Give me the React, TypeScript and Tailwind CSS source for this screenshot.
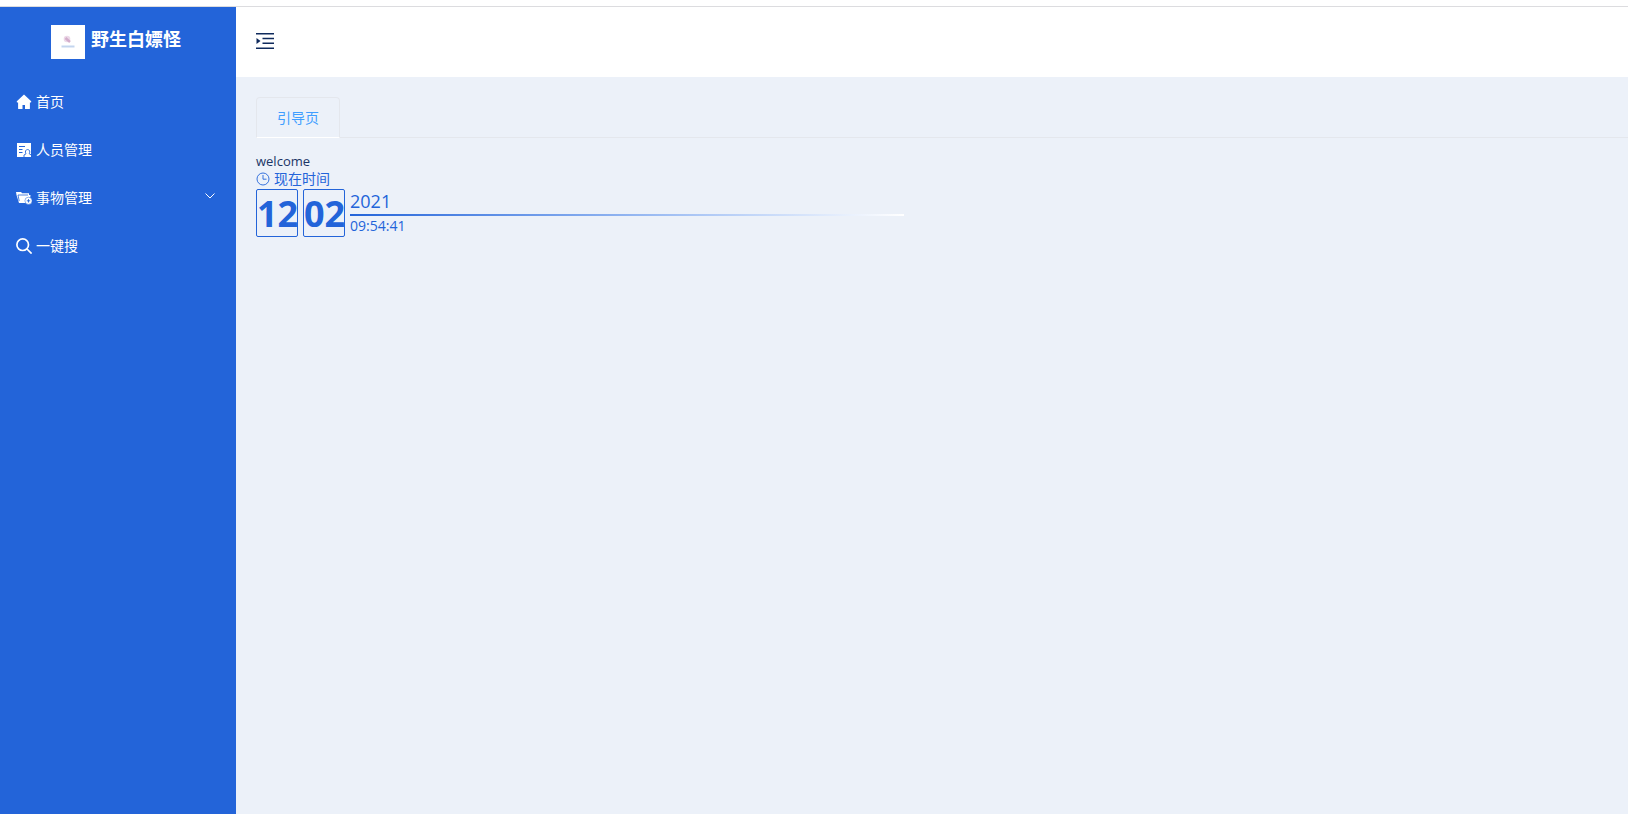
import { useState } from 'react'
import type { ReactNode } from 'react'

// ── Icons ──────────────────────────────────────────────────────────────────────

function HomeIcon() {
  return (
    <svg className="w-4 h-4 shrink-0" viewBox="0 0 16 16" fill="currentColor" aria-hidden="true">
      <path d="M8 0.600 L0.800 7.200 Q0.500 8.400 1.400 8.500 H2.100 V14.400 Q2.100 15 2.700 15 H6.500 V11 H9 V15 H13.300 Q13.900 15 13.900 14.400 V8.500 H14.600 Q15.500 8.400 15.200 7.200 Z" />
    </svg>
  )
}

function StaffIcon() {
  return (
    <svg className="w-4 h-4 shrink-0" viewBox="0 0 16 16" aria-hidden="true">
      <path fill="currentColor" d="M1 1h14v14H1z" />
      <path stroke="#2364d9" strokeWidth="1.1" fill="none" d="M3 4.500h6M3 7.500h3.500M3 10.500h3.500" />
      <path stroke="#2364d9" strokeWidth="0.900" fill="none" d="M8 15v-2l2-1.200C8.600 9.500 9.800 7.500 11.600 7.500s3 2 1.600 4.300l2 1.200" />
    </svg>
  )
}

function FolderIcon() {
  return (
    <svg className="w-4 h-4 shrink-0" viewBox="0 0 16 16" aria-hidden="true">
      <path fill="currentColor" d="M0 2h5l1.200 1.300H13V5h1.500L14 9.500V13H3L0.500 5z" />
      <path fill="none" stroke="#2364d9" strokeWidth="0.800" d="M3.200 11L2 5h10" />
      <circle cx="12.500" cy="10.800" r="3.600" fill="currentColor" stroke="#2364d9" strokeWidth="0.500" />
      <path stroke="#2364d9" strokeWidth="0.900" d="M10.800 10.800h3.400M12.500 9.100v3.400" />
    </svg>
  )
}

function SearchIcon() {
  return (
    <svg className="w-4 h-4 shrink-0" viewBox="0 0 16 16" fill="none" stroke="currentColor" strokeWidth="1.7" aria-hidden="true">
      <circle cx="6.700" cy="6.700" r="5.800" />
      <path d="M11 11l4.600 4.600" />
    </svg>
  )
}

function ChevronIcon() {
  return (
    <svg className="w-3 h-3" viewBox="0 0 12 12" fill="none" stroke="currentColor" strokeWidth="1" aria-hidden="true">
      <path d="M1.500 3.500L6 8l4.500-4.500" />
    </svg>
  )
}

function IndentIcon() {
  return (
    <svg className="w-[18px] h-4" viewBox="0 0 18 16" aria-hidden="true">
      <path stroke="#0f2a5c" strokeWidth="1.6" d="M0 0.800h18M6.500 5.500h11.500M6.500 10.300h11.500M0 15.200h18" />
      <path fill="#0f2a5c" d="M0.500 5l4 3-4 3z" />
    </svg>
  )
}

function ClockIcon() {
  return (
    <svg className="w-3.5 h-3.5" viewBox="0 0 14 14" fill="none" stroke="currentColor" strokeWidth="0.9" aria-hidden="true">
      <circle cx="7" cy="7" r="6" />
      <path d="M7 3v4.200h3.500" />
    </svg>
  )
}

function Logo() {
  return (
    <svg className="w-[34px] h-[34px] bg-white shrink-0" viewBox="0 0 34 34" aria-hidden="true">
      <circle cx="16" cy="14" r="3.300" fill="#ecd9e8" />
      <path d="M14.500 13l4.500 4" fill="none" stroke="#d3adcb" strokeWidth="2.400" />
      <path d="M10.500 21.500h13" stroke="#c3d5ee" strokeWidth="2" />
    </svg>
  )
}

// ── Sidebar ────────────────────────────────────────────────────────────────────

type MenuItem = {
  label: string
  icon: ReactNode
  expandable?: boolean
}

const MENU: MenuItem[] = [
  { label: '首页', icon: <HomeIcon /> },
  { label: '人员管理', icon: <StaffIcon /> },
  { label: '事物管理', icon: <FolderIcon />, expandable: true },
  { label: '一键搜', icon: <SearchIcon /> },
]

function Sidebar() {
  return (
    <aside className="w-[236px] shrink-0 bg-[#2364d9] text-white">
      <div className="flex justify-center gap-1.5 pt-[18px] pr-1 h-[71px]">
        <Logo />
        <h1 className="text-lg leading-7 font-bold">野生白嫖怪</h1>
      </div>
      <nav>
        {MENU.map((item) => (
          <button
            key={item.label}
            type="button"
            className="flex items-center gap-1 w-full h-12 pl-4 pr-5 text-sm cursor-pointer"
          >
            {item.icon}
            <span>{item.label}</span>
            {item.expandable && (
              <span className="ml-auto pb-1">
                <ChevronIcon />
              </span>
            )}
          </button>
        ))}
      </nav>
    </aside>
  )
}

// ── Clock panel ────────────────────────────────────────────────────────────────

function DateBox({ value }: { value: string }) {
  return (
    <div className="w-[42px] h-12 border border-[#2364d9] rounded-xs text-4xl leading-[48px] font-bold">
      {value}
    </div>
  )
}

function TimePanel() {
  const [now] = useState({ month: '12', day: '02', year: '2021', time: '09:54:41' })

  return (
    <section className="text-[#2364d9]">
      <h2 className="flex items-center gap-1 text-sm leading-[18px] pb-px">
        <ClockIcon />
        现在时间
      </h2>
      <div className="flex gap-[5px] w-[648px] max-w-full">
        <DateBox value={now.month} />
        <DateBox value={now.day} />
        <div className="flex-1">
          <div className="text-lg leading-[25px]">{now.year}</div>
          <div className="h-0.5 bg-linear-to-r from-[#2364d9] to-white" />
          <div className="text-sm leading-5">{now.time}</div>
        </div>
      </div>
    </section>
  )
}

// ── Page ───────────────────────────────────────────────────────────────────────

export default function App() {
  return (
    <div className="flex flex-col min-h-screen bg-white font-['Open_Sans','Noto_Sans_CJK_SC',sans-serif]">
      <div className="h-[7px] border-b border-[#dcdcdf]" />
      <div className="flex flex-1">
        <Sidebar />
        <div className="flex flex-col flex-1 min-w-0">
          <header className="flex items-center h-[70px] px-5 pb-0.5">
            <button type="button" aria-label="折叠菜单" className="cursor-pointer">
              <IndentIcon />
            </button>
          </header>
          <main className="flex-1 bg-[#ecf1f9] pt-5 pl-5">
            <div role="tablist" className="flex border-b border-[#e4e7ed]">
              <button
                type="button"
                role="tab"
                aria-selected="true"
                className="h-[41px] -mb-px px-5 rounded-t border border-[#e4e7ed] border-b-white text-sm text-[#409eff] cursor-pointer"
              >
                引导页
              </button>
            </div>
            <div className="pt-3.5">
              <p className="text-[13px] leading-[18px] text-[#1b3566]">welcome</p>
              <TimePanel />
            </div>
          </main>
        </div>
      </div>
    </div>
  )
}
